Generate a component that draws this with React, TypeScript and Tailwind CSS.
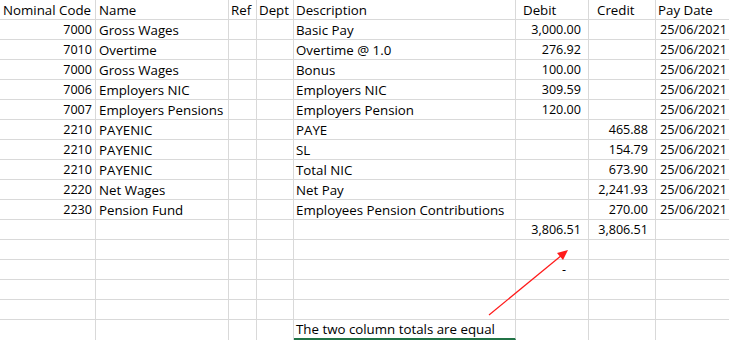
import React from "react";

type Row = {
  code?: string;
  name?: string;
  desc?: string;
  debit?: string;
  credit?: string;
  date?: string;
  dash?: boolean;
  note?: string;
};

const rows: Row[] = [
  { code: "7000", name: "Gross Wages", desc: "Basic Pay", debit: "3,000.00", date: "25/06/2021" },
  { code: "7010", name: "Overtime", desc: "Overtime @ 1.0", debit: "276.92", date: "25/06/2021" },
  { code: "7000", name: "Gross Wages", desc: "Bonus", debit: "100.00", date: "25/06/2021" },
  { code: "7006", name: "Employers NIC", desc: "Employers NIC", debit: "309.59", date: "25/06/2021" },
  { code: "7007", name: "Employers Pensions", desc: "Employers Pension", debit: "120.00", date: "25/06/2021" },
  { code: "2210", name: "PAYENIC", desc: "PAYE", credit: "465.88", date: "25/06/2021" },
  { code: "2210", name: "PAYENIC", desc: "SL", credit: "154.79", date: "25/06/2021" },
  { code: "2210", name: "PAYENIC", desc: "Total NIC", credit: "673.90", date: "25/06/2021" },
  { code: "2220", name: "Net Wages", desc: "Net Pay", credit: "2,241.93", date: "25/06/2021" },
  { code: "2230", name: "Pension Fund", desc: "Employees Pension Contributions", credit: "270.00", date: "25/06/2021" },
  { debit: "3,806.51", credit: "3,806.51" },
  {},
  { dash: true },
  {},
  {},
  { note: "The two column totals are equal" },
];

const cell = "h-5 border-r border-b border-[#d9d9d9] flex items-end pb-[2px] whitespace-nowrap overflow-visible leading-none";
const txt = "text-[13.3px]";
const num = "text-[12.6px]";

export default function App() {
  return (
    <div
      className="relative w-[729px] h-[340px] overflow-hidden bg-white text-black text-[13px]"
      style={{ fontFamily: '"Open Sans", "Noto Sans", sans-serif' }}
    >
      <div className="grid grid-cols-[96px_133px_28px_37px_222px_73px_67px_1fr]">
        <div className={`${cell} ${txt} pl-[3px]`}>Nominal Code</div>
        <div className={`${cell} ${txt} pl-[3px]`}>Name</div>
        <div className={`${cell} ${txt} pl-[2px]`}>Ref</div>
        <div className={`${cell} ${txt} pl-[2px]`}>Dept</div>
        <div className={`${cell} ${txt} pl-[2px]`}>Description</div>
        <div className={`${cell} ${txt} pl-[7px]`}>Debit</div>
        <div className={`${cell} ${txt} pl-[8px]`}>Credit</div>
        <div className={`${cell} ${txt} border-r-0 pl-[2px]`}>Pay Date</div>
        {rows.map((r, i) => {
          const last = i === rows.length - 1;
          const b = last ? "border-b-0" : "";
          return (
            <React.Fragment key={i}>
              <div className={`${cell} ${num} ${b} justify-end pr-[3px]`}>{r.code}</div>
              <div className={`${cell} ${txt} ${b} pl-[3px]`}>{r.name}</div>
              <div className={`${cell} ${b}`}></div>
              <div className={`${cell} ${b}`}></div>
              <div
                className={`${cell} ${txt} pl-[2px] ${
                  last ? "border-b-2 border-b-[#217346] pb-0" : ""
                }`}
              >
                {r.desc ?? r.note}
              </div>
              <div className={`${cell} ${num} ${b} justify-end ${r.dash ? "pr-[22px]" : "pr-[7px]"}`}>
                {r.dash ? "-" : r.debit}
              </div>
              <div className={`${cell} ${num} ${b} justify-end pr-[7px]`}>{r.credit}</div>
              <div className={`${cell} ${num} ${b} border-r-0 pl-[4px]`}>{r.date}</div>
            </React.Fragment>
          );
        })}
      </div>
      <svg
        className="absolute left-0 top-0 pointer-events-none"
        width="729"
        height="340"
        viewBox="0 0 729 340"
      >
        <line x1="489" y1="315" x2="562" y2="255" stroke="#ff1a1a" strokeWidth="1.2" />
        <polygon points="568,250 557,253 563,260" fill="#ff1a1a" />
      </svg>
    </div>
  );
}
